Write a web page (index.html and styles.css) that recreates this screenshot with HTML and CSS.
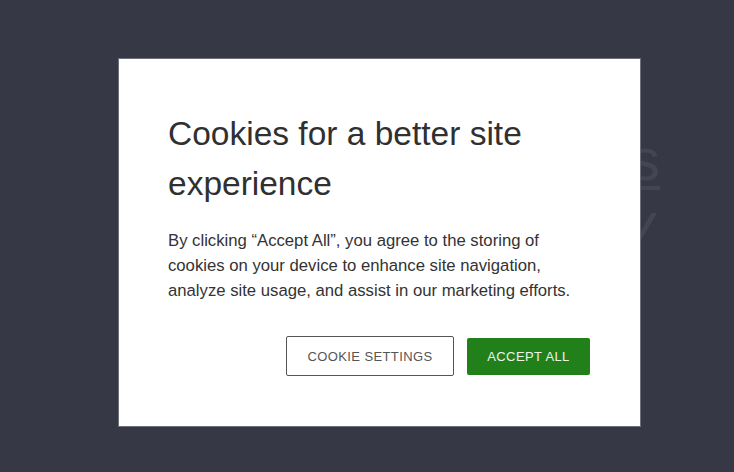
FILE: index.html
```html
<!DOCTYPE html>
<html lang="en">
<head>
<meta charset="utf-8">
<title>Cookies</title>
<link rel="stylesheet" href="styles.css">
</head>
<body>
<div class="page">
  <div class="page-text">
    <span class="bg-word bg-s">s</span>
    <span class="bg-word bg-y">y</span>
  </div>
</div>
<div class="overlay">
  <div class="modal" role="dialog" aria-labelledby="ck-title">
    <h2 id="ck-title" class="modal-title">Cookies for a better site experience</h2>
    <p class="modal-text">By clicking “Accept All”, you agree to the storing of cookies on your device to enhance site navigation, analyze site usage, and assist in our marketing efforts.</p>
    <div class="modal-actions">
      <button class="btn btn-outline">Cookie Settings</button>
      <button class="btn btn-primary">Accept All</button>
    </div>
  </div>
</div>
</body>
</html>
```
FILE: styles.css
```css
html, body {
  margin: 0;
  padding: 0;
  width: 734px;
  height: 472px;
  overflow: hidden;
  background: #363945;
  font-family: "Liberation Sans", Arial, sans-serif;
}
.page {
  width: 734px;
  height: 472px;
}
.page-text {
  display: flex;
  flex-direction: column;
  align-items: flex-end;
  padding: 128px 74px 0 0;
  color: #434652;
  font-size: 60px;
  line-height: 64px;
}
.bg-s {
  text-decoration: underline;
  text-decoration-thickness: 4px;
  text-underline-offset: 6px;
}
.bg-y {
  font-style: italic;
  padding-right: 6px;
}
.overlay {
  position: absolute;
  inset: 0;
  display: flex;
  align-items: flex-start;
  justify-content: flex-start;
  padding: 58px 0 0 118px;
}
.modal {
  box-sizing: border-box;
  width: 523px;
  height: 369px;
  background: #fff;
  border: 1px solid #6e717b;
  padding: 50px 50px 0 49px;
}
.modal-title {
  margin: 0;
  font-weight: normal;
  font-size: 33.5px;
  line-height: 50px;
  color: #303030;
}
.modal-text {
  margin: 19px 0 0;
  font-size: 16.7px;
  line-height: 25px;
  color: #333;
}
.modal-actions {
  display: flex;
  justify-content: flex-end;
  align-items: center;
  gap: 13px;
  margin-top: 33px;
}
.btn {
  font-family: "Liberation Sans", Arial, sans-serif;
  font-size: 13px;
  text-transform: uppercase;
  letter-spacing: 0.4px;
  border-radius: 2px;
  cursor: pointer;
}
.btn-outline {
  width: 168px;
  height: 40px;
  background: #fff;
  border: 1px solid #555;
  color: #555;
}
.btn-primary {
  width: 123px;
  height: 37px;
  background: #22801b;
  border: none;
  color: #eef4ec;
}
```
